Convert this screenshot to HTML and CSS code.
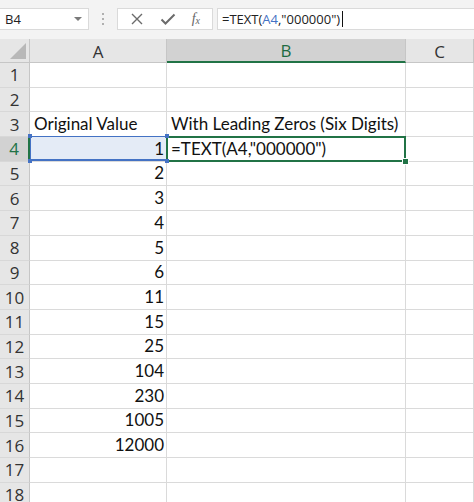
FILE: index.html
```html
<!DOCTYPE html>
<html>
<head>
<meta charset="utf-8">
<link rel="stylesheet" href="styles.css">
</head>
<body>
<div class="topbar">
  <div class="namebox"><span class="nb-text">B4</span>
    <svg class="dd" width="8" height="5" viewBox="0 0 8 5"><path d="M0 0 L8 0 L4 4 Z" fill="#7a7a7a"/></svg>
  </div>
  <div class="dots"><i></i><i></i><i></i></div>
  <div class="btns">
    <svg class="ico" width="14" height="14" viewBox="0 0 14 14"><path d="M2 2 L12 12 M12 2 L2 12" stroke="#6b6b6b" stroke-width="1.4" fill="none"/></svg>
    <svg class="ico" width="16" height="14" viewBox="0 0 16 14"><path d="M1.5 7.5 L5.5 11.5 L14.5 2.5" stroke="#6b6b6b" stroke-width="2" fill="none"/></svg>
    <span class="fx">f<sub>x</sub></span>
  </div>
  <div class="formula">=TEXT(<span class="ref">A4</span>,"000000")<span class="caret"></span></div>
</div>
<div class="sheet">
  <div class="hd corner"><span class="tri"></span></div>
  <div class="hd col">A</div>
  <div class="hd col sel">B</div>
  <div class="hd col">C</div>

  <div class="hd row">1</div><div class="c"></div><div class="c"></div><div class="c"></div>
  <div class="hd row">2</div><div class="c"></div><div class="c"></div><div class="c"></div>
  <div class="hd row">3</div><div class="c t">Original Value</div><div class="c t">With Leading Zeros (Six Digits)</div><div class="c"></div>
  <div class="hd row rsel">4</div><div class="c n refcell">1<span class="k k1"></span><span class="k k2"></span><span class="k k3"></span><span class="k k4"></span></div><div class="c t active">=TEXT(A4,"000000")<span class="handle"></span></div><div class="c"></div>
  <div class="hd row">5</div><div class="c n">2</div><div class="c"></div><div class="c"></div>
  <div class="hd row">6</div><div class="c n">3</div><div class="c"></div><div class="c"></div>
  <div class="hd row">7</div><div class="c n">4</div><div class="c"></div><div class="c"></div>
  <div class="hd row">8</div><div class="c n">5</div><div class="c"></div><div class="c"></div>
  <div class="hd row">9</div><div class="c n">6</div><div class="c"></div><div class="c"></div>
  <div class="hd row">10</div><div class="c n">11</div><div class="c"></div><div class="c"></div>
  <div class="hd row">11</div><div class="c n">15</div><div class="c"></div><div class="c"></div>
  <div class="hd row">12</div><div class="c n">25</div><div class="c"></div><div class="c"></div>
  <div class="hd row">13</div><div class="c n">104</div><div class="c"></div><div class="c"></div>
  <div class="hd row">14</div><div class="c n">230</div><div class="c"></div><div class="c"></div>
  <div class="hd row">15</div><div class="c n">1005</div><div class="c"></div><div class="c"></div>
  <div class="hd row">16</div><div class="c n">12000</div><div class="c"></div><div class="c"></div>
  <div class="hd row">17</div><div class="c"></div><div class="c"></div><div class="c"></div>
  <div class="hd row">18</div><div class="c"></div><div class="c"></div><div class="c"></div>
</div>
</body>
</html>
```
FILE: styles.css
```css
html, body { margin: 0; padding: 0; background: #fff; overflow: hidden; }
body { width: 474px; height: 502px; font-family: "Open Sans", "Segoe UI", sans-serif; }

.topbar {
  height: 39px;
  background: #f3f3f3;
  display: flex;
  align-items: flex-start;
  padding-top: 8px;
  box-sizing: border-box;
}
.namebox {
  width: 89px; height: 22px; background: #fff;
  border: 1px solid #dadada; border-left: none;
  box-sizing: border-box;
  display: flex; align-items: center; justify-content: space-between;
  padding: 0 6px 0 5px;
  font-size: 13px; color: #222;
}
.dd { margin-top: 1px; }
.dots { width: 28px; height: 22px; display: flex; flex-direction: column; align-items: center; justify-content: center; gap: 3px; }
.dots i { display: block; width: 2px; height: 2px; background: #b0b0b0; }
.btns {
  width: 96px; height: 22px; background: #fff;
  border: 1px solid #dadada; box-sizing: border-box;
  display: flex; align-items: center; justify-content: space-around;
  padding: 0 4px;
}
.fx { font-family: "Liberation Serif", serif; font-style: italic; font-size: 14px; color: #666; line-height: 1; }
.fx sub { font-size: 10px; vertical-align: -1px; }
.formula {
  flex: 1; height: 22px; margin-left: 4px; background: #fff;
  border: 1px solid #dadada; border-right: none; box-sizing: border-box;
  display: flex; align-items: center; padding-left: 4px;
  font-size: 13px; color: #222; white-space: pre;
}
.ref { color: #4472c4; }
.caret { display: inline-block; width: 1px; height: 16px; background: #111; margin-left: 2px; }

.sheet {
  display: grid;
  grid-template-columns: 30px 137px 239px 68px;
  grid-template-rows: 24px repeat(18, 24.7px);
}
.hd {
  background: #e6e6e6; color: #333;
  box-sizing: border-box;
  display: flex; align-items: center; justify-content: center;
  font-family: "Open Sans", sans-serif;
}
.corner { border-right: 1px solid #c6c6c6; border-bottom: 1px solid #c6c6c6; position: relative; }
.tri {
  position: absolute; right: 3px; bottom: 3px;
  width: 0; height: 0;
  border-left: 16px solid transparent; border-bottom: 16px solid #b8b8b8;
}
.col { font-size: 17px; border-right: 1px solid #c6c6c6; border-bottom: 1px solid #c6c6c6; padding-top: 1px; }
.col.sel { background: #d2d2d2; color: #1e6b41; border-bottom: 2px solid #217346; }
.row { font-size: 17px; border-right: 1px solid #c6c6c6; border-bottom: 1px solid #d8d8d8; }
.row.rsel { background: #d2d2d2; color: #217346; border-right: 2px solid #217346; }

.c {
  border-right: 1px solid #dadada; border-bottom: 1px solid #dadada;
  box-sizing: border-box;
  font-family: "Lato", "Open Sans", sans-serif; font-size: 17px; color: #111;
  display: flex; align-items: flex-end; padding: 0 2px 2px 4px;
  white-space: nowrap; position: relative;
}
.n { justify-content: flex-end; }
.refcell { background: #e4ebf6; }
.refcell::after {
  content: ""; position: absolute; left: 0; top: -1px; right: -1px; bottom: 0;
  border: 1px solid #4472c4; border-width: 1px 1px 2px 1px;
}
.k { position: absolute; width: 4px; height: 4px; background: #4472c4; z-index: 2; }
.k1 { left: -2px; top: -3px; }
.k2 { right: -3px; top: -3px; }
.k3 { left: -2px; bottom: -2px; }
.k4 { right: -3px; bottom: -2px; }
.active::after {
  content: ""; position: absolute; left: -1px; top: -1px; right: -1px; bottom: -1px;
  border: 2px solid #217346;
}
.handle { position: absolute; right: -4px; bottom: -4px; width: 5px; height: 5px; background: #217346; border: 1px solid #fff; z-index: 3; }
```
